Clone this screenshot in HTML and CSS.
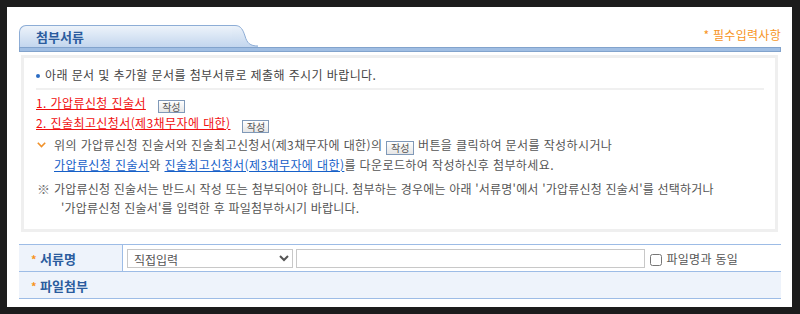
FILE: index.html
```html
<!DOCTYPE html>
<html lang="ko">
<head>
  <meta charset="UTF-8">
  <title>첨부서류</title>
  <link rel="stylesheet" href="styles.css">
</head>
<body>
  <div class="frame">
    <div class="tab-row">
      <div class="tab">첨부서류</div>
      <svg class="tab-curve" width="26" height="22" viewBox="0 0 26 22">
        <defs>
          <linearGradient id="tabgrad" x1="0" y1="0" x2="0" y2="22" gradientUnits="userSpaceOnUse">
            <stop offset="0" stop-color="#edf3fa"/>
            <stop offset="1" stop-color="#c3d6ee"/>
          </linearGradient>
        </defs>
        <path d="M0 0.5 H3 C9 0.5 11 5 13 11 C15 18 18 21 26 21 V22 H0 Z" fill="url(#tabgrad)"/>
        <path d="M0 0.5 H3 C9 0.5 11 5 13 11 C15 18 18 21 26 21" fill="none" stroke="#8dadd6" stroke-width="1"/>
      </svg>
      <span class="req">* 필수입력사항</span>
    </div>
    <div class="tab-bar"></div>

    <div class="guide">
      <p class="intro"><span class="dot"></span>아래 문서 및 추가할 문서를 첨부서류로 제출해 주시기 바랍니다.</p>

      <ol class="docs">
        <li><a href="#" class="red-link">1. 가압류신청 진술서</a><span class="btn-write">작성</span></li>
        <li><a href="#" class="red-link">2. 진술최고신청서(제3채무자에 대한)</a><span class="btn-write">작성</span></li>
      </ol>

      <div class="note">
        <span class="mark">
          <svg width="9" height="6" viewBox="0 0 9 6"><path d="M0.8 0.8 L4.5 4.6 L8.2 0.8" fill="none" stroke="#f0912a" stroke-width="1.6"/></svg>
        </span>
        <div class="note-text">
          <span class="line">위의 가압류신청 진술서와 진술최고신청서(제3채무자에 대한)의 <span class="btn-write inline">작성</span> 버튼을 클릭하여 문서를 작성하시거나</span>
          <span class="line"><a href="#" class="blue-link">가압류신청 진술서</a>와 <a href="#" class="blue-link">진술최고신청서(제3채무자에 대한)</a>를 다운로드하여 작성하신후 첨부하세요.</span>
        </div>
      </div>

      <div class="note warn">
        <span class="mark">※</span>
        <div class="note-text">
          <span class="line">가압류신청 진술서는 반드시 작성 또는 첨부되어야 합니다. 첨부하는 경우에는 아래 '서류명'에서 '가압류신청 진술서'를 선택하거나</span>
          <span class="line indent">'가압류신청 진술서'를 입력한 후 파일첨부하시기 바랍니다.</span>
        </div>
      </div>
    </div>

    <table class="form">
      <tr>
        <th class="divided"><span class="star">*</span>서류명</th>
        <td class="fields">
          <select class="doc-select">
            <option>직접입력</option>
            <option>가압류신청 진술서</option>
          </select>
          <input type="text" class="doc-name">
          <label class="same"><input type="checkbox"> 파일명과 동일</label>
        </td>
      </tr>
      <tr class="shaded">
        <th><span class="star">*</span>파일첨부</th>
        <td></td>
      </tr>
    </table>
  </div>
</body>
</html>
```

FILE: styles.css
```css
body {
  margin: 0;
  background-color: #1c1c1c;
  font-family: "Noto Sans CJK KR", "Noto Sans", sans-serif;
  font-size: 12px;
  color: #555;
}

.frame {
  margin: 7px;
  width: 762px;
  height: 282px;
  padding: 18px 11px 0 12px;
  background-color: #fff;
}

.tab-row {
  display: flex;
  align-items: flex-end;
  height: 22px;
}

.tab {
  width: 196px;
  height: 21px;
  padding-left: 16px;
  line-height: 22px;
  font-weight: bold;
  font-size: 13px;
  color: #2b5c9e;
  border-top: 1px solid #8dadd6;
  border-left: 1px solid #8dadd6;
  border-top-left-radius: 7px;
  background: linear-gradient(#edf3fa, #c3d6ee);
}

.tab-curve {
  display: block;
}

.req {
  margin-left: auto;
  padding-bottom: 5px;
  line-height: 14px;
  letter-spacing: 0.3px;
  color: #f7941d;
}

.tab-bar {
  height: 3px;
  background-color: #a0bee3;
  border: 1px solid #82a3cc;
}

.guide {
  margin: 3px 3px 0 2px;
  padding: 7px 11px 12px 12px;
  border: 3px solid #efefef;
  letter-spacing: 0.4px;
}

.intro {
  margin: 0;
  height: 20px;
  line-height: 20px;
  padding-bottom: 3px;
  border-bottom: 2px solid #f0f0f0;
  color: #444;
  white-space: nowrap;
}

.dot {
  display: inline-block;
  width: 4px;
  height: 4px;
  margin: 0 5px 2px 0;
  border-radius: 50%;
  background-color: #2b6cc4;
  vertical-align: middle;
}

.docs {
  list-style: none;
  margin: 3px 0 0;
  padding: 0;
}

.docs li {
  height: 20px;
  line-height: 20px;
  white-space: nowrap;
}

.red-link {
  color: #f01010;
  text-decoration: underline;
}

.blue-link {
  color: #1660c8;
  text-decoration: underline;
}

.btn-write {
  display: inline-block;
  box-sizing: border-box;
  width: 27px;
  height: 13px;
  margin-left: 12px;
  border: 1px solid #8099b8;
  background: linear-gradient(#ffffff, #e6e6e6);
  font-size: 10px;
  line-height: 11px;
  letter-spacing: 0;
  text-align: center;
  color: #555;
  vertical-align: bottom;
}

.btn-write.inline {
  width: 28px;
  height: 14px;
  margin-left: 0;
  line-height: 12px;
}

.note {
  display: flex;
  margin-top: 2px;
  line-height: 20px;
}

.note .mark {
  flex: 0 0 17px;
  padding-left: 1px;
  color: #777;
  letter-spacing: 0;
}

.note .mark svg {
  display: block;
  margin-top: 7px;
}

.note-text .line {
  display: block;
  white-space: nowrap;
}

.note-text .indent {
  padding-left: 7px;
}

.warn {
  margin-top: 4px;
  line-height: 19px;
  letter-spacing: 0.2px;
}

.warn .mark {
  font-size: 13px;
}

.form {
  width: 762px;
  margin-top: 12px;
  border-collapse: collapse;
  border-top: 1px solid #9dbce6;
}

.form tr {
  border-bottom: 1px solid #9dbce6;
}

.form th {
  width: 91px;
  height: 26px;
  padding: 0 0 0 12px;
  text-align: left;
  font-weight: bold;
  font-size: 13px;
  color: #2b5c9e;
  background-color: #eef3fb;
}

.form th.divided {
  border-right: 1px solid #9dbce6;
}

.star {
  display: inline-block;
  width: 9px;
  color: #f7941d;
  font-size: 11px;
}

.fields {
  padding: 0 0 0 4px;
  white-space: nowrap;
}

.shaded td {
  background-color: #eef3fb;
}

.doc-select {
  box-sizing: border-box;
  width: 166px;
  height: 19px;
  margin: 0;
  padding: 0 2px;
  border: 1px solid #c8c8c8;
  border-radius: 0;
  background-color: #fff;
  font-family: inherit;
  font-size: 12px;
  color: #555;
  vertical-align: middle;
}

.doc-name {
  box-sizing: border-box;
  width: 349px;
  height: 19px;
  margin: 0;
  border: 1px solid #c8c8c8;
  vertical-align: middle;
}

.same {
  margin-left: 0;
  color: #555;
  letter-spacing: 0.3px;
  vertical-align: middle;
}

.same input {
  width: 12px;
  height: 12px;
  margin: 0 1px 0 1px;
  vertical-align: -2px;
}
```
